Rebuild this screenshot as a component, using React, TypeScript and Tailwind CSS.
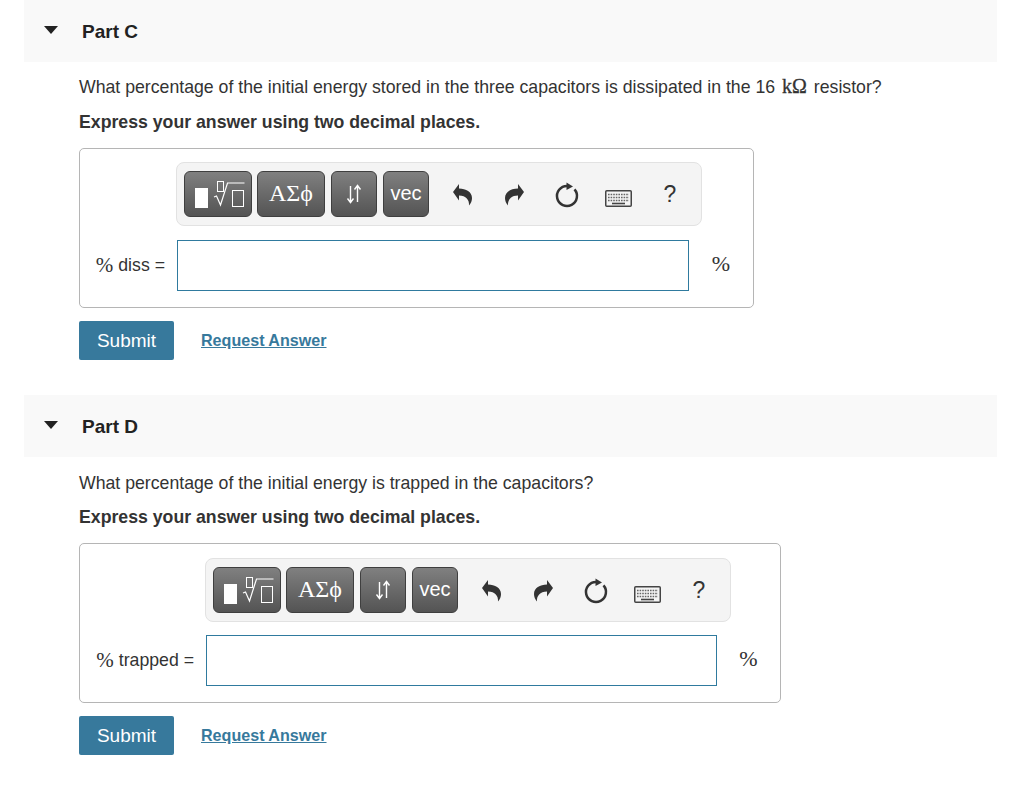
import React from 'react';

const sans = "font-['Liberation_Sans',Arial,sans-serif]";
const serif = "font-['Liberation_Serif','Times_New_Roman',serif]";

const toolBtn =
  'h-[46px] flex items-center rounded-[6px] border border-[#3f3f3f] bg-gradient-to-b from-[#808080] to-[#545454] text-white';

const UndoIcon = ({ flip }: { flip?: boolean }) => (
  <svg width="21" height="23" viewBox="0 0 21 23" className={flip ? '-scale-x-100' : ''}>
    <path d="M1 9L7 1v4.500C14 5.500 20 9 20 15c0 3-1 5-3 7.500.5-5.500-3-10-10-10v5z" fill="#333" />
  </svg>
);

const KeyboardIcon = () => (
  <svg width="27" height="17" viewBox="0 0 27 17" fill="none">
    <rect x="0.75" y="0.75" width="25.5" height="15.5" rx="1" fill="#f4f4f4" stroke="#444" strokeWidth="1.5" />
    <path d="M3 4.500h21M3 7.500h21" stroke="#666" strokeWidth="1.6" strokeDasharray="1.6 1" />
    <path d="M3 10.500h21" stroke="#666" strokeWidth="1.6" strokeDasharray="1.6 1" />
    <path d="M7 13.500h13" stroke="#444" strokeWidth="1.6" />
  </svg>
);

const ResetIcon = () => (
  <svg width="26" height="28" viewBox="0 0 26 28" fill="none">
    <path d="M13 5A10 10 0 1 0 20.500 8.400" stroke="#333" strokeWidth="2.5" />
    <path d="M12.500 1.500L19 5.500 12.500 9z" fill="#333" />
  </svg>
);

const Toolbar = () => (
  <div className="flex h-[64px] w-[526px] items-center rounded-[8px] border border-[#e2e2e2] bg-[#f4f4f4] pl-[7px]">
    <div className={`${toolBtn} w-[68px] pl-[10px]`}>
      <div className="mt-[8px] h-[20px] w-[13px] bg-white" />
      <svg width="36" height="36" viewBox="0 0 36 36" fill="none" stroke="#fff" strokeWidth="1" className="ml-[3px]">
        <rect x="6.500" y="5.500" width="6" height="10" />
        <path d="M3 21l2.500-1 4 9 7-22h17" strokeWidth="1.200" />
        <rect x="21.500" y="14.500" width="11" height="16" />
      </svg>
    </div>
    <div className={`${toolBtn} ${serif} ml-[5px] w-[68px] justify-center pb-[2px] text-[24px]`}>ΑΣϕ</div>
    <div className={`${toolBtn} ml-[6px] w-[46px] justify-center`}>
      <svg width="16" height="20" viewBox="0 0 16 20" fill="none" stroke="#fff" strokeWidth="1.400">
        <path d="M4.500 2v16M1.500 14.500l3 4 3-4" />
        <path d="M11.500 18V2M8.500 5.500l3-4 3 4" />
      </svg>
    </div>
    <div className={`${toolBtn} ${sans} ml-[6px] w-[46px] justify-center pb-[3px] text-[20px]`}>vec</div>
    <div className="ml-[23px] flex">
      <UndoIcon />
    </div>
    <div className="ml-[31px] flex">
      <UndoIcon flip />
    </div>
    <div className="ml-[29px] flex pt-[2px]">
      <ResetIcon />
    </div>
    <div className="ml-[25px] flex pt-[8px]">
      <KeyboardIcon />
    </div>
    <div className={`${sans} ml-[31px] w-[14px] text-center text-[23px] text-[#333]`}>?</div>
  </div>
);

type PartProps = {
  title: string;
  question: React.ReactNode;
  label: string;
  boxWidth: string;
  questionTop: string;
  expressTop: string;
  toolbarTop: string;
  toolbarIndent: string;
  inputTop: string;
  inputWidth: string;
  unitWidth: string;
};

const Part = ({
  title,
  question,
  label,
  boxWidth,
  questionTop,
  expressTop,
  toolbarTop,
  toolbarIndent,
  inputTop,
  inputWidth,
  unitWidth,
}: PartProps) => (
  <section>
    <div className="flex h-[62px] items-center bg-[#f9f9f9] pl-[20px]">
      <svg width="14" height="8" viewBox="0 0 14 8" className="mt-[-2px]">
        <path d="M0 0h14L7 8z" fill="#222" />
      </svg>
      <h2 className="ml-[24px] pt-[2px] text-[19px] font-bold text-[#222]">{title}</h2>
    </div>
    <div className="pl-[55px]">
      <p className={`${questionTop} h-[24px] text-[17.700px] leading-[24px] text-[#333]`}>{question}</p>
      <p className={`${expressTop} h-[24px] text-[17.700px] font-bold leading-[24px] text-[#333]`}>
        Express your answer using two decimal places.
      </p>
      <div className={`mt-[14px] h-[160px] rounded-[5px] border border-[#b5b5b5] ${boxWidth}`}>
        <div className={`${toolbarTop} ${toolbarIndent}`}>
          <Toolbar />
        </div>
        <div className={`${inputTop} flex items-center`}>
          <div className="flex flex-1 items-center justify-end pr-[12px] text-[17.700px] text-[#333]">
            <span className={`${serif} mr-[5px] text-[21px]`}>%</span>
            {label} =
          </div>
          <div className={`h-[51px] border border-[#2f7a9e] bg-white ${inputWidth}`} />
          <div className={`${serif} ${unitWidth} pb-[4px] text-center text-[22px] text-[#333]`}>%</div>
        </div>
      </div>
      <div className="mt-[13px] flex items-center">
        <button className="h-[39px] w-[95px] rounded-[2px] bg-[#37799c] pt-[1px] text-[19px] text-white">Submit</button>
        <a className="ml-[27px] text-[16.100px] font-bold text-[#37799c] underline">Request Answer</a>
      </div>
    </div>
  </section>
);

const App: React.FC = () => {
  return (
    <div className={`${sans} h-[794px] w-[1024px] overflow-hidden bg-white pl-[24px] pr-[27px]`}>
      <Part
        title="Part C"
        question={
          <>
            What percentage of the initial energy stored in the three capacitors is dissipated in the 16{' '}
            <span className={`${serif} mx-[2px] text-[20px] leading-none [-webkit-text-stroke:0.3px]`}>kΩ</span> resistor?
          </>
        }
        label="diss"
        boxWidth="w-[675px]"
        questionTop="mt-[13px]"
        expressTop="mt-[11px]"
        toolbarTop="mt-[13px]"
        toolbarIndent="ml-[96px]"
        inputTop="mt-[14px]"
        inputWidth="w-[512px]"
        unitWidth="w-[64px]"
      />
      <div className="h-[35px]" />
      <Part
        title="Part D"
        question="What percentage of the initial energy is trapped in the capacitors?"
        label="trapped"
        boxWidth="w-[702px]"
        questionTop="mt-[14px]"
        expressTop="mt-[10px]"
        toolbarTop="mt-[14px]"
        toolbarIndent="ml-[125px]"
        inputTop="mt-[13px]"
        inputWidth="w-[511px]"
        unitWidth="w-[63px]"
      />
    </div>
  );
};

export default App;
